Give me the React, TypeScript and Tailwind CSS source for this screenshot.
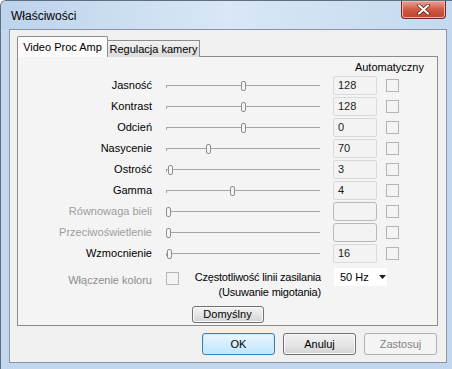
import React from "react";

type Row = { label: string; thumb: number; value: string; disabled?: boolean };

const rows: Row[] = [
  { label: "Jasność", thumb: 78, value: "128" },
  { label: "Kontrast", thumb: 78, value: "128" },
  { label: "Odcień", thumb: 78, value: "0" },
  { label: "Nasycenie", thumb: 43, value: "70" },
  { label: "Ostrość", thumb: 5, value: "3" },
  { label: "Gamma", thumb: 67, value: "4" },
  { label: "Równowaga bieli", thumb: 3, value: "", disabled: true },
  { label: "Przeciwoświetlenie", thumb: 3, value: "", disabled: true },
  { label: "Wzmocnienie", thumb: 4, value: "16" },
];

function Checkbox() {
  return <div className="w-[13px] h-[13px] border border-[#b4b4b4] bg-[#f4f4f4] shrink-0" />;
}

function Slider({ thumb }: { thumb: number }) {
  return (
    <div className="relative w-[158px] h-[11px] shrink-0">
      <div className="absolute left-[3px] right-[1px] top-[5px] h-px bg-[#a6a6a6]" />
      <div className="absolute left-[3px] top-[5px] w-px h-[3px] bg-[#a6a6a6]" />
      <div
        className="absolute top-[1px] w-[5px] h-[10px] rounded-[2px] border border-[#8e8e8e] bg-[#f6f6f6]"
        style={{ left: thumb }}
      />
    </div>
  );
}

function Btn({ children, kind }: { children: React.ReactNode; kind?: "default" | "disabled" }) {
  const cls =
    kind === "default"
      ? "border-[#3c7fb1] bg-gradient-to-b from-[#eaf6fd] to-[#bee6fd] text-black shadow-[inset_0_0_0_1px_#c8e9fc]"
      : kind === "disabled"
      ? "border-[#adb2b5] bg-[#f4f4f4] text-[#838383]"
      : "border-[#707070] bg-gradient-to-b from-[#f2f2f2] via-[#e6e6e6] to-[#d3d3d3] text-black shadow-[inset_0_0_0_1px_#fbfbfb]";
  return (
    <div className={`w-[73px] h-[22px] rounded-[3px] border flex items-center justify-center ${cls}`}>
      {children}
    </div>
  );
}

export default function App() {
  return (
    <div
      className="w-[452px] h-[369px] overflow-hidden flex flex-col bg-[#c3d8ee] text-[11px] text-[#1b1b1b] whitespace-nowrap border-l border-t border-[#5f6f80] rounded-tl-[6px]"
      style={{ fontFamily: '"Liberation Sans", Arial, sans-serif' }}
    >
      {/* title bar */}
      <div className="h-[28px] flex justify-between bg-gradient-to-r from-[#bcd3eb] via-[#d9e7f6] to-[#c4d9ef] shrink-0">
        <div className="pl-[10px] pt-[6px] text-[12px] text-black">Właściwości</div>
        <div className="mr-[6px] w-[45px] h-[18px] rounded-b-[4px] border border-t-0 border-[#6d2b22] bg-gradient-to-b from-[#e6a597] via-[#cf5a45] to-[#c0422c] flex items-center justify-center shadow-[inset_0_0_0_1px_#f0b6a8]">
          <svg width="13" height="11" viewBox="0 0 13 11">
            <path d="M2 1.5 L11 9.5 M11 1.5 L2 9.5" stroke="#5a1c12" strokeWidth="3.6" strokeLinecap="round" />
            <path d="M2 1.5 L11 9.5 M11 1.5 L2 9.5" stroke="#ffffff" strokeWidth="2.2" strokeLinecap="round" />
          </svg>
        </div>
      </div>

      {/* client area */}
      <div className="ml-[8px] mr-[5px] h-[334px] border border-[#8795a6] bg-[#f0f0f0] flex flex-col pt-[6px] pl-[7px] pr-[9px]">
        {/* tabs */}
        <div className="flex items-end h-[21px] relative z-10">
          <div className="w-[91px] h-[21px] border border-b-0 border-[#8c8c8c] bg-[#fbfbfb] flex items-center justify-center text-black rounded-t-[2px]">
            Video Proc Amp
          </div>
          <div className="w-[92px] h-[17px] border border-l-0 border-b-0 border-[#8c8c8c] bg-gradient-to-b from-[#f2f2f2] to-[#dcdcdc] flex items-center justify-center text-black">
            Regulacja kamery
          </div>
        </div>

        {/* tab panel */}
        <div className="-mt-px w-[421px] h-[270px] border border-[#8c8c8c] bg-[#f4f4f4] flex flex-col pt-[2px]">
          <div className="h-[15px] flex justify-end pr-[13px] text-black">Automatyczny</div>
          <div className="flex flex-col pt-[1px]">
            {rows.map((r) => (
              <div key={r.label} className="h-[21px] flex items-center">
                <div className={`w-[134px] text-right shrink-0 ${r.disabled ? "text-[#9d9d9d]" : "text-black"}`}>
                  {r.label}
                </div>
                <div className="w-[11px] shrink-0" />
                <Slider thumb={r.thumb} />
                <div
                  className={`ml-[12px] w-[44px] h-[19px] border bg-[#f3f3f3] flex items-center pl-[4px] shrink-0 ${
                    r.disabled ? "border-[#b9b9b9] rounded-[3px]" : "border-[#d9d9d9] rounded-[2px]"
                  }`}
                >
                  {r.value}
                </div>
                <div className="ml-[9px]">
                  <Checkbox />
                </div>
              </div>
            ))}
          </div>

          {/* bottom options */}
          <div className="flex items-start mt-[3px] h-[34px]">
            <div className="w-[134px] text-right text-[#8d8d8d] pt-[5px] shrink-0">Włączenie koloru</div>
            <div className="ml-[14px] mt-[5px]">
              <Checkbox />
            </div>
            <div className="ml-[15px] w-[127px] flex flex-col items-end leading-[15px] pt-[3px] text-black tracking-[-0.2px] shrink-0">
              <div>Częstotliwość linii zasilania</div>
              <div>(Usuwanie migotania)</div>
            </div>
            <div className="ml-[12px] w-[55px] h-[20px] bg-white border border-[#f4f4f4] flex items-center pl-[6px] text-black shrink-0">
              <span>50 Hz</span>
              <svg className="ml-[10px]" width="7" height="4" viewBox="0 0 7 4">
                <path d="M0 0 H7 L3.5 4 Z" fill="#1b1b1b" />
              </svg>
            </div>
          </div>

          <div className="flex justify-center mt-[5px]">
            <div className="w-[72px] h-[17px] rounded-[3px] border border-[#707070] bg-gradient-to-b from-[#f2f2f2] via-[#e6e6e6] to-[#d3d3d3] shadow-[inset_0_0_0_1px_#fbfbfb] flex items-center justify-center text-black">
              Domyślny
            </div>
          </div>
        </div>

        {/* dialog buttons */}
        <div className="flex justify-end gap-[8px] mt-[7px]">
          <Btn kind="default">OK</Btn>
          <Btn>Anuluj</Btn>
          <Btn kind="disabled">Zastosuj</Btn>
        </div>
      </div>
    </div>
  );
}
